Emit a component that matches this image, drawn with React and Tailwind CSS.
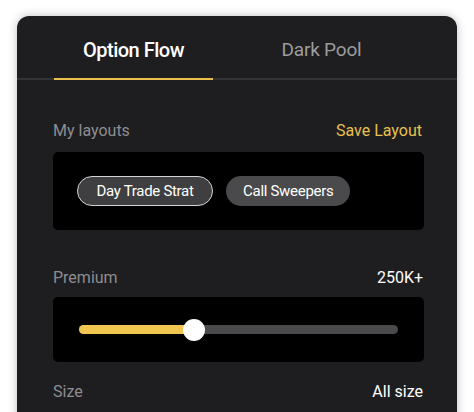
import React from "react";

const layouts = [
  { id: 1, name: "Day Trade Strat", active: true },
  { id: 2, name: "Call Sweepers", active: false },
];

export default function App() {
  const premium = 36;

  return (
    <div
      className="w-[474px] h-[412px] bg-white overflow-hidden"
      style={{ fontFamily: "Roboto, 'Liberation Sans', sans-serif" }}
    >
      <div className="ml-[17px] mt-[16px] w-[440px] h-[420px] rounded-t-[12px] bg-[#1e1e20] shadow-[0_0_10px_rgba(0,0,0,0.25)]">
        {/* tabs */}
        <div className="flex h-[64px] border-b-2 border-[#333336] pl-[37px]">
          <div className="relative w-[159px] flex items-center justify-center pt-[6px] text-[20px] font-medium text-white tracking-[-0.5px]">
            Option Flow
            <div className="absolute left-0 right-0 bottom-[-2px] h-[2px] bg-[#e9c04c]" />
          </div>
          <div className="ml-[29px] w-[159px] flex items-center justify-center pt-[6px] text-[19px] text-[#9c9c9f] tracking-[-0.2px]">
            Dark Pool
          </div>
        </div>

        <div className="pl-[36px] pr-[33px]">
          {/* layouts */}
          <div className="mt-[38px] flex items-center justify-between h-[24px] pt-[2px] text-[16px]">
            <span className="text-[#8d8d91]">My layouts</span>
            <button className="mr-[2px] text-[#e9c04c]">Save Layout</button>
          </div>
          <div className="mt-[10px] h-[78px] rounded-[5px] bg-black flex items-center gap-[13px] pl-[24px]">
            {layouts.map((l) =>
              l.active ? (
                <button
                  key={l.id}
                  className="h-[30px] px-[18.5px] rounded-full bg-[#3f3f41] border-[1.5px] border-[#d4d4d4] text-[15px] tracking-[-0.3px] text-white"
                >
                  {l.name}
                </button>
              ) : (
                <button
                  key={l.id}
                  className="h-[30px] px-[17px] rounded-full bg-[#4a4a4c] text-[15px] tracking-[-0.3px] text-white"
                >
                  {l.name}
                </button>
              )
            )}
          </div>

          {/* premium */}
          <div className="mt-[34px] flex items-center justify-between h-[24px] pt-[3px] text-[16px]">
            <span className="text-[#8d8d91]">Premium</span>
            <span className="mr-[1px] text-white">250K+</span>
          </div>
          <div className="mt-[9px] h-[65px] rounded-[5px] bg-black flex items-center px-[26px]">
            <div className="relative w-full h-[9px] rounded-full bg-[#4a4a4c]">
              <div
                className="h-full rounded-full bg-[#f0c550]"
                style={{ width: `${premium}%` }}
              />
              <div
                className="absolute top-1/2 w-[22px] h-[22px] -translate-x-1/2 -translate-y-1/2 rounded-full bg-white"
                style={{ left: `${premium}%` }}
              />
            </div>
          </div>

          {/* size */}
          <div className="mt-[17px] flex items-center justify-between h-[24px] pt-[2px] text-[16px]">
            <span className="text-[#8d8d91]">Size</span>
            <span className="mr-[1px] text-white">All size</span>
          </div>
        </div>
      </div>
    </div>
  );
}
